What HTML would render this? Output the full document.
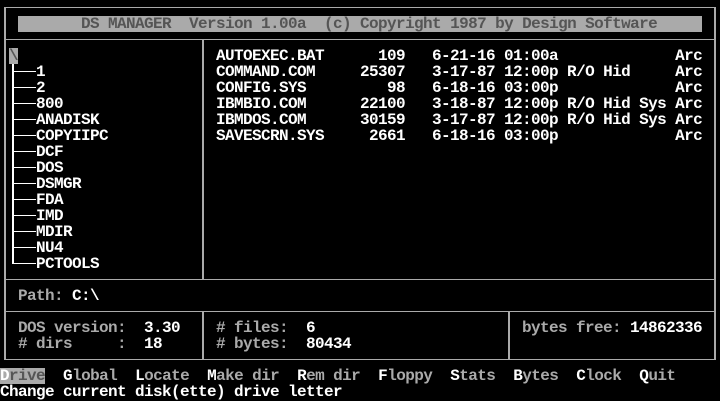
<!DOCTYPE html>
<html><head><meta charset="utf-8"><style>
html,body{margin:0;padding:0;background:#000;}
body{width:720px;height:400px;position:relative;overflow:hidden;font-family:"Liberation Mono",monospace;font-size:16px;letter-spacing:-0.6px;font-weight:bold;}
.t{position:absolute;white-space:pre;line-height:16px;height:16px;color:#aaa;}
.w{color:#fff;}
.h{position:absolute;height:1px;background:#aaa;}
.v{position:absolute;width:2px;background:#aaa;}
.tw{position:absolute;background:#fff;}
</style></head><body>
<div class="h" style="left:4px;width:712px;top:7px"></div>
<div class="h" style="left:4px;width:712px;top:39px"></div>
<div class="h" style="left:4px;width:712px;top:279px"></div>
<div class="h" style="left:4px;width:712px;top:311px"></div>
<div class="h" style="left:4px;width:712px;top:359px"></div>
<div class="v" style="left:4px;top:7px;height:353px"></div>
<div class="v" style="left:714px;top:7px;height:353px"></div>
<div class="v" style="left:202px;top:39px;height:241px"></div>
<div class="v" style="left:202px;top:311px;height:49px"></div>
<div class="v" style="left:508px;top:311px;height:49px"></div>
<div style="position:absolute;left:18px;top:16px;width:684px;height:16px;background:#aaa"></div>
<div class="t" style="left:81px;top:16px;color:#555">DS MANAGER  Version 1.00a  (c) Copyright 1987 by Design Software</div>
<div style="position:absolute;left:9px;top:48px;width:9px;height:16px;background:#aaa"></div>
<div class="t" style="left:9px;top:48px;color:#555">\</div>
<div class="tw" style="left:12px;top:64px;width:2px;height:200px"></div>
<div class="tw" style="left:13px;top:71px;width:23px;height:1px"></div>
<div class="tw" style="left:13px;top:87px;width:23px;height:1px"></div>
<div class="tw" style="left:13px;top:103px;width:23px;height:1px"></div>
<div class="tw" style="left:13px;top:119px;width:23px;height:1px"></div>
<div class="tw" style="left:13px;top:135px;width:23px;height:1px"></div>
<div class="tw" style="left:13px;top:151px;width:23px;height:1px"></div>
<div class="tw" style="left:13px;top:167px;width:23px;height:1px"></div>
<div class="tw" style="left:13px;top:183px;width:23px;height:1px"></div>
<div class="tw" style="left:13px;top:199px;width:23px;height:1px"></div>
<div class="tw" style="left:13px;top:215px;width:23px;height:1px"></div>
<div class="tw" style="left:13px;top:231px;width:23px;height:1px"></div>
<div class="tw" style="left:13px;top:247px;width:23px;height:1px"></div>
<div class="tw" style="left:13px;top:263px;width:23px;height:1px"></div>
<div class="t w" style="left:36px;top:64px;height:208px">1
2
800
ANADISK
COPYIIPC
DCF
DOS
DSMGR
FDA
IMD
MDIR
NU4
PCTOOLS</div>
<div class="t w" style="left:216px;top:48px;height:96px">AUTOEXEC.BAT      109   6-21-16 01:00a             Arc
COMMAND.COM     25307   3-17-87 12:00p R/O Hid     Arc
CONFIG.SYS         98   6-18-16 03:00p             Arc
IBMBIO.COM      22100   3-18-87 12:00p R/O Hid Sys Arc
IBMDOS.COM      30159   3-17-87 12:00p R/O Hid Sys Arc
SAVESCRN.SYS     2661   6-18-16 03:00p             Arc</div>
<div class="t" style="left:18px;top:288px">Path: <span class="w">C:\</span></div>
<div class="t" style="left:18px;top:320px;height:32px">DOS version:  <span class="w">3.30</span>
# dirs     :  <span class="w">18</span></div>
<div class="t" style="left:216px;top:320px;height:32px"># files:  <span class="w">6</span>
# bytes:  <span class="w">80434</span></div>
<div class="t" style="left:522px;top:320px">bytes free: <span class="w">14862336</span></div>
<div style="position:absolute;left:0;top:368px;width:45px;height:16px;background:#aaa"></div>
<div class="t" style="left:0;top:368px"><span style="color:#fff">D</span><span style="color:#555">rive</span>  <span class="w">G</span>lobal  <span class="w">L</span>ocate  <span class="w">M</span>ake dir  <span class="w">R</span>em dir  <span class="w">F</span>loppy  <span class="w">S</span>tats  <span class="w">B</span>ytes  <span class="w">C</span>lock  <span class="w">Q</span>uit</div>
<div class="t w" style="left:0;top:384px">Change current disk(ette) drive letter</div>
</body></html>
